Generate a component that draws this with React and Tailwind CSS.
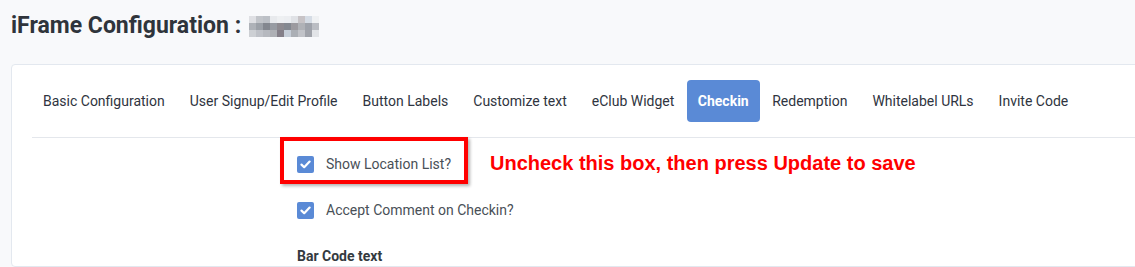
import React from "react";

const tabs = [
  "Basic Configuration",
  "User Signup/Edit Profile",
  "Button Labels",
  "Customize text",
  "eClub Widget",
  "Checkin",
  "Redemption",
  "Whitelabel URLs",
  "Invite Code",
];

// pixelated (blurred) store name next to the title
const blurCells = [
  ["#dfe0e4", "#c2c5ca", "#bcc0c6", "#e8eaed", "#eef0f2", "#eceef1", "#e0e2e6", "#c7c3c6", "#d5dce5", "#eff1f3"],
  ["#aeb2b8", "#9ca1a8", "#83878f", "#979ba2", "#8d8a90", "#848890", "#9c9a9f", "#b0b2b7", "#9ea2aa", "#babdc3"],
  ["#cdd0d4", "#bfc2c8", "#b6b9bf", "#aeb0b5", "#847f88", "#c6ced8", "#abafb5", "#c1c3c8", "#a0a3aa", "#e2e4e7"],
];

function Blur() {
  return (
    <svg width="70" height="21" viewBox="0 0 70 21" className="ml-2 shrink-0">
      {blurCells.map((row, r) =>
        row.map((c, i) => <rect key={r + "-" + i} x={i * 7} y={r * 7} width="7" height="7" fill={c} />)
      )}
    </svg>
  );
}

function CheckBox() {
  return (
    <span className="flex h-[17px] w-[17px] shrink-0 items-center justify-center rounded-[2px] bg-[#5a8ad6]">
      <svg width="11" height="9" viewBox="0 0 11 9" fill="none">
        <path d="M1.5 4.6 4.2 7.2 9.6 1.6" stroke="white" strokeWidth="2.2" strokeLinecap="round" strokeLinejoin="round" />
      </svg>
    </span>
  );
}

export default function App() {
  return (
    <div
      className="min-h-[267px] w-full overflow-hidden bg-[#f8f9fb]"
      style={{ fontFamily: "Roboto, 'Noto Sans', sans-serif" }}
    >
      <div className="flex items-center pl-[11px] pt-[12px]">
        <h1 className="text-[23px] font-bold leading-[28px] text-[#2f343b]">iFrame Configuration :</h1>
        <Blur />
      </div>

      <div className="ml-[11px] mt-[24px] w-[1160px] rounded-[4px] border border-[#e3e8ef] bg-white pl-[20px] pt-[15px]">
        <nav className="flex border-b border-[#e4e7ec] pb-[15px]">
          {tabs.map((t) =>
            t === "Checkin" ? (
              <span
                key={t}
                className="flex h-[42px] items-center rounded-[4px] bg-[#5a8ad6] px-[11px] text-[14px] font-bold text-white"
              >
                {t}
              </span>
            ) : (
              <span key={t} className="flex h-[42px] items-center px-[12.5px] text-[14px] text-[#2f3440] first:pl-[11px]">
                {t}
              </span>
            )
          )}
        </nav>

        <div className="flex pt-[18px]">
          <div className="w-[265px] shrink-0" />
          <div className="flex flex-col">
            <div className="relative flex h-[17px] items-center">
              <div className="absolute left-[-17px] top-[-19px] h-[47px] w-[188px] border-4 border-[#ff0000] shadow-[2px_2px_3px_rgba(0,0,0,0.3)]" />
              <CheckBox />
              <span className="ml-[12px] text-[14px] text-[#495057]">Show Location List?</span>
              <span
                className="absolute left-[193px] top-[-6px] whitespace-nowrap text-[20px] font-bold leading-[26px] text-[#ff0000]"
                style={{ fontFamily: "'Liberation Sans', Arial, sans-serif" }}
              >
                Uncheck this box, then press Update to save
              </span>
            </div>

            <div className="mt-[29px] flex h-[17px] items-center">
              <CheckBox />
              <span className="ml-[12px] text-[14px] text-[#495057]">Accept Comment on Checkin?</span>
            </div>

            <div className="mt-[27px] text-[14px] font-bold leading-[20px] text-[#343a40]">Bar Code text</div>
          </div>
        </div>
      </div>
    </div>
  );
}
